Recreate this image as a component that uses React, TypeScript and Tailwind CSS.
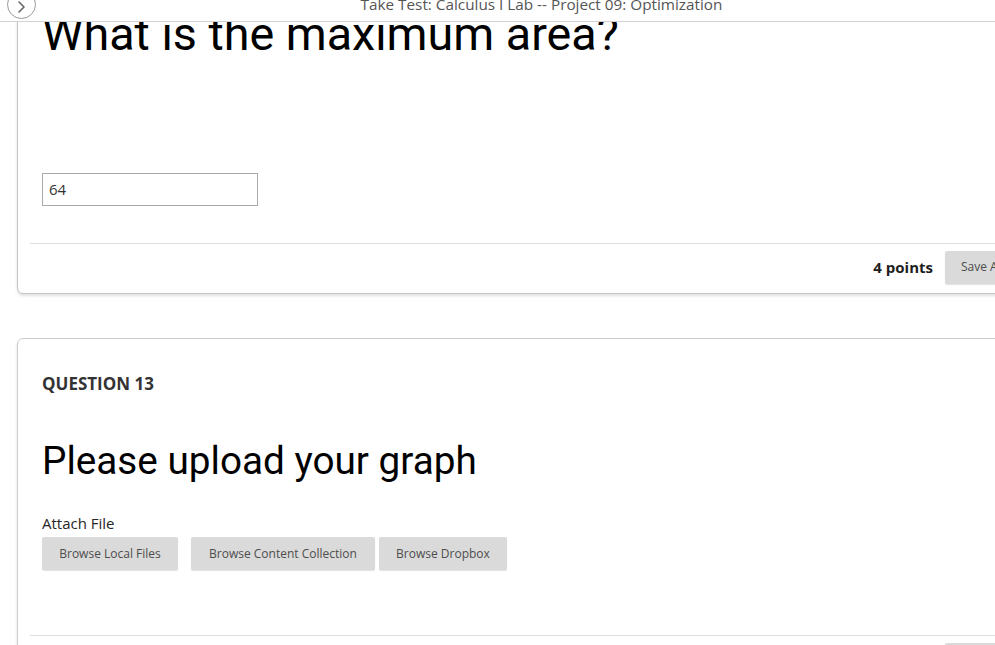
import React from 'react';

const sans = { fontFamily: '"Open Sans", "Liberation Sans", sans-serif' };
const display = { fontFamily: 'Roboto, "Liberation Sans", Arial, sans-serif' };

function GrayButton({ label, width }: { label: string; width: string }) {
  return (
    <button
      className={`${width} h-[33px] rounded-[2px] bg-[#dadada] text-[12px] text-[#4d4d4d] shadow-[0_1px_1px_rgba(0,0,0,0.12)] flex items-center justify-center whitespace-nowrap`}
    >
      {label}
    </button>
  );
}

function CardFooter({ points }: { points: string }) {
  return (
    <div>
      <div className="ml-3 border-t border-[#dedede]" />
      <div className="flex items-center justify-end gap-3 pt-[7px] pb-[9px] pr-3">
        {points && <span className="text-[15px] font-bold text-[#1e1e1e]">{points}</span>}
        <button className="w-[100px] h-[33px] rounded-[2px] bg-[#dadada] text-[12px] text-[#4d4d4d] text-left pl-4 shadow-[0_1px_1px_rgba(0,0,0,0.12)] whitespace-nowrap">
          Save Answer
        </button>
      </div>
    </div>
  );
}

export default function App() {
  return (
    <div className="relative w-[995px] h-[645px] overflow-hidden bg-white" style={sans}>
      {/* scrolled content */}
      <div className="-mt-[40px] pl-[17px] flex flex-col gap-[44px]">
        {/* Question 12 (scrolled) */}
        <div className="w-[1041px] rounded-[6px] border border-[#c4c4c4] bg-white shadow-[0_2px_3px_rgba(0,0,0,0.12)]">
          <div className="pl-[24px] pt-[50px]">
            <h2 className="text-[46.7px] leading-none text-black" style={display}>
              What is the maximum area?
            </h2>
            <input
              readOnly
              value="64"
              className="mt-[115px] mb-[37px] block w-[216px] h-[33px] border border-[#a9a9a9] px-[6px] text-[15px] text-[#333] outline-none"
              style={sans}
            />
          </div>
          <CardFooter points="4 points" />
        </div>

        {/* Question 13 */}
        <div className="w-[1041px] rounded-[6px] border border-[#cdcdcd] bg-white shadow-[0_2px_3px_rgba(0,0,0,0.12)]">
          <div className="pl-[24px] pt-[35px] pb-[65px]">
            <h3 className="text-[17px] leading-[20px] font-bold text-[#333]">QUESTION 13</h3>
            <h2 className="mt-[48px] text-[38.7px] leading-none text-black" style={display}>
              Please upload your graph
            </h2>
            <div className="mt-[33px] text-[15px] leading-[20px] text-[#262626]">Attach File</div>
            <div className="mt-[4px] flex">
              <GrayButton label="Browse Local Files" width="w-[136px]" />
              <div className="ml-[13px]">
                <GrayButton label="Browse Content Collection" width="w-[184px]" />
              </div>
              <div className="ml-[4px]">
                <GrayButton label="Browse Dropbox" width="w-[128px]" />
              </div>
            </div>
          </div>
          <CardFooter points="" />
        </div>
      </div>

      {/* fixed header */}
      <div className="absolute top-0 left-0 right-0 h-[22px] bg-white border-b border-[#d2d2d2]">
        <div className="flex justify-center pl-[88px] -mt-[5px]">
          <span className="text-[15.3px] leading-[18px] text-[#555]">
            Take Test: Calculus I Lab -- Project 09: Optimization
          </span>
        </div>
        <button className="absolute left-[7px] -top-[10px] w-[29px] h-[29px] rounded-full border border-[#9a9a9a] bg-white flex items-end justify-center pb-[5px]">
          <svg width="9" height="12" viewBox="0 0 9 12" fill="none">
            <path d="M2 1l5 5-5 5" stroke="#666" strokeWidth="1.6" strokeLinecap="round" strokeLinejoin="round" />
          </svg>
        </button>
      </div>
    </div>
  );
}
